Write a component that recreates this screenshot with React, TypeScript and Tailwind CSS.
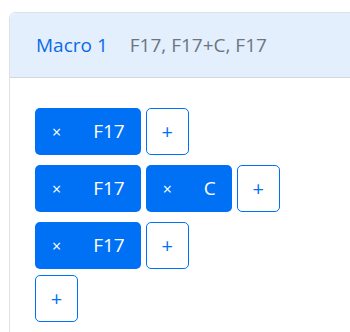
import React from 'react';

type Step = string[];

const steps: Step[] = [['F17'], ['F17', 'C'], ['F17']];

const font = { fontFamily: '"Open Sans", "Noto Sans", sans-serif' };

const KeyChip: React.FC<{ label: string }> = ({ label }) => (
    <div className="flex h-[47px] items-center rounded-[5px] bg-[#0070f5] pl-[17px] pr-[16px] text-white">
        <span className="text-[16px] leading-none">×</span>
        <span className="ml-[32px] text-[19px] leading-none">{label}</span>
    </div>
);

const AddButton: React.FC = () => (
    <button className="flex h-[47px] w-[43px] items-center justify-center rounded-[5px] border border-[#0070f5] bg-white text-[20px] leading-none text-[#0070f5]">
        +
    </button>
);

export default function App() {
    const summary = steps.map((s) => s.join('+')).join(', ');

    return (
        <div className="h-[332px] w-[350px] overflow-hidden bg-white pl-[9px] pt-[12px]" style={font}>
            <div className="h-[400px] w-[420px] rounded-tl-[6px] border border-[#dee2e6]">
                <div className="flex h-[65px] items-center rounded-tl-[6px] border-b border-[#cfd8e3] bg-[#e4effd] pl-[26px]">
                    <span className="text-[19px] text-[#0a6ae8]">Macro 1</span>
                    <span className="ml-[22px] text-[19px] text-[#6c757d]">{summary}</span>
                </div>
                <div className="pl-[25px] pt-[30px]">
                    {steps.map((keys, i) => (
                        <div key={i} className="mb-[10px] flex gap-[5px]">
                            {keys.map((k, j) => (
                                <KeyChip key={j} label={k} />
                            ))}
                            <AddButton />
                        </div>
                    ))}
                    <div className="-mt-[4px] flex">
                        <AddButton />
                    </div>
                </div>
            </div>
        </div>
    );
}
